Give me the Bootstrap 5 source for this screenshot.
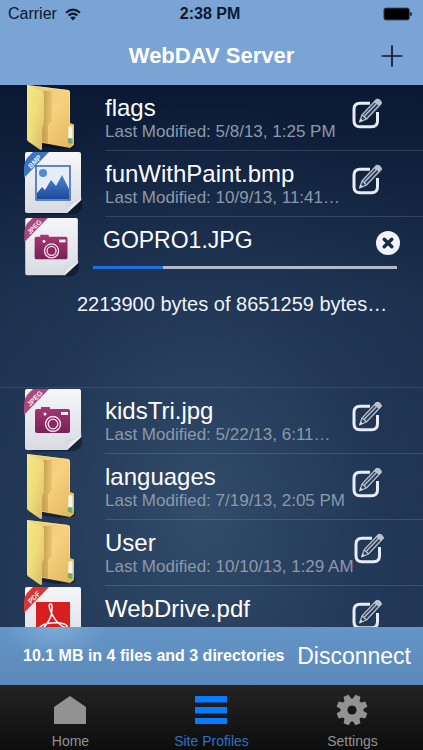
<!DOCTYPE html>
<html lang="en">
<head>
<meta charset="utf-8">
<meta name="viewport" content="width=device-width, initial-scale=1">
<title>WebDAV Server</title>
<link href="https://cdn.jsdelivr.net/npm/bootstrap@5.3.0/dist/css/bootstrap.min.css" rel="stylesheet">
<style>
  body { font-family: "Liberation Sans", Arial, sans-serif; background: #111; color: #fff; }
  button { color: inherit; }
  .top-bar { background: #7aa4d4; }
  .status-row { height: 28px; padding: 0 11px 0 8px; font-size: 16px; line-height: 28px; color: #0b1830; }
  .side { flex: 1 1 0; }
  .title-row { height: 57px; padding: 0 20px 2px; }
  .title-row h1 { font-size: 22px; line-height: 28px; }
  .files-pane {
    background:
      radial-gradient(ellipse 75% 75% at 48% 78%, rgba(62, 90, 120, .65), rgba(42, 66, 98, .35) 55%, transparent),
      linear-gradient(#0a1933, #1a2f4c 40%, #1f3453);
  }
  .file-row { padding-left: 22px; gap: 21px; }
  .file-icon { width: 62px; height: 66px; }
  .file-body { height: 66px; border-bottom: 1px solid rgba(255, 255, 255, .13); padding: 10px 41px 0 0; }
  .file-text { min-width: 0; flex: 1 1 0; }
  .file-name { font-size: 24px; line-height: 26px; }
  .file-date { font-size: 17px; line-height: 22px; color: #8d99aa; }
  .edit-btn { margin-top: 3px; width: 30px; height: 32px; }
  .transfer-row { height: 171px; padding: 0 26px 0 24px; gap: 13px; border-bottom: 1px solid rgba(255, 255, 255, .1); }
  .transfer-icon { width: 56px; height: 62px; }
  .transfer-head { height: 49px; padding: 10px 0 0 10px; margin-right: -3px; }
  .transfer-name { font-size: 23px; line-height: 26px; }
  .transfer-bar { height: 3px; background: #b4b9c8; border-radius: 0; }
  .transfer-bar .progress-bar { background: #1f6fdc; }
  .transfer-note { font-size: 20px; line-height: 24px; margin: 23px 0 0 -16px; color: #eef3fa; }
  .ribbon-text { font-size: 7px; font-weight: 700; fill: #fdeef4; }
  .summary-bar { height: 58px; padding: 0 12px 0 23px; background: radial-gradient(ellipse 50px 32px at 55px 0, rgba(140, 185, 225, .6), transparent), linear-gradient(#6595c7, #5a89b9); }
  .summary-text { font-size: 16px; line-height: 20px; }
  .disconnect { font-size: 23px; line-height: 28px; }
  .tab-strip { height: 65px; background: linear-gradient(#232323, #0d0d0d); }
  .tab-link { color: #929292; font-size: 14px; line-height: 18px; padding-top: 9px; gap: 4px; }
  .tab-link.current { color: #0a7bff; }
  .tab-link.current span { color: #2a72c8; }
</style>
<script src="https://cdn.jsdelivr.net/npm/bootstrap@5.3.0/dist/js/bootstrap.bundle.min.js"></script>
</head>
<body class="vh-100 d-flex flex-column overflow-hidden">

<svg width="0" height="0" class="position-absolute" aria-hidden="true">
  <defs>
    <linearGradient id="paper" x1="0" y1="0" x2="0" y2="1"><stop offset="0" stop-color="#f6f6f9"/><stop offset="1" stop-color="#d9dbe4"/></linearGradient>
    <linearGradient id="curl" x1="0" y1="0" x2="1" y2="1"><stop offset="0" stop-color="#fff"/><stop offset=".35" stop-color="#d5d8e0"/><stop offset=".55" stop-color="#f4f5f8"/></linearGradient>
    <linearGradient id="plum" x1="0" y1="0" x2="0" y2="1"><stop offset="0" stop-color="#a8376f"/><stop offset="1" stop-color="#79205a"/></linearGradient>
    <linearGradient id="blue" x1="0" y1="0" x2="0" y2="1"><stop offset="0" stop-color="#4a86d0"/><stop offset="1" stop-color="#1d4a9c"/></linearGradient>
    <linearGradient id="flap" x1="0" y1="0" x2="1" y2="1"><stop offset="0" stop-color="#f5e883"/><stop offset=".5" stop-color="#efdb7c"/><stop offset="1" stop-color="#d6bb5c"/></linearGradient>
    <linearGradient id="back" x1="0" y1="0" x2="1" y2="1"><stop offset="0" stop-color="#edcb78"/><stop offset=".5" stop-color="#f8d07e"/><stop offset="1" stop-color="#e0b55a"/></linearGradient>
    <linearGradient id="shade" x1="0" y1="0" x2="1" y2="0"><stop offset="0" stop-color="#8b6a1c" stop-opacity=".5"/><stop offset="1" stop-color="#8b6a1c" stop-opacity="0.100"/></linearGradient>
  </defs>
  <symbol id="folder" viewBox="0 0 62 66">
    <path d="M10 60L36 64L52 63L54 58L40 52Z" fill="#000" opacity=".4"/>
    <path d="M5 0L46 5Q48 5.500 48 7V38L52 39.500V60L48 63L5 55Z" fill="url(#back)"/>
    <path d="M21 6H30V36L26 40V58L20 57Z" fill="url(#shade)"/>
    <path d="M46.500 41L50.500 41.500V58L46 57Z" fill="#f2f5ec"/>
    <path d="M46 53L50.500 53.500V59L46 58Z" fill="#74a867"/>
    <path d="M5 0L20 6Q22 7 22 9V39L20 42.500V64Q19.500 66 17 64L7 57Q5 56 5 53Z" fill="url(#flap)"/>
    <path d="M5.500 .5L46 5.500Q47.500 6 47.500 7.500V38" fill="none" stroke="#ffe9aa" stroke-width=".6"/>
  </symbol>
  <symbol id="sheet" viewBox="0 0 62 66">
    <path d="M8 61H46L60 49V56Q58 63 50 63.500H10Z" fill="#000" opacity=".35"/>
    <path d="M5 1H57Q59 1 59 3V49L45 62H5Q3 62 3 60V3Q3 1 5 1Z" fill="url(#paper)"/>
    <path d="M45 62Q46 57 44 52Q54 53 59 46V49Z" fill="url(#curl)" stroke="#c3c7d0" stroke-width=".5"/>
  </symbol>
  <symbol id="jpeg" viewBox="0 0 62 66">
    <use href="#sheet"/>
    <path d="M11 1H27L2 27V16Q2 11 5 7Z" fill="#a8487c"/>
    <path d="M15 21H19V19H28V21H46Q48 21 48 23V43Q48 45 46 45H15Q13 45 13 43V23Q13 21 15 21Z" fill="url(#plum)"/>
    <circle cx="31" cy="36" r="9" fill="#8b285f"/>
    <circle cx="31" cy="36" r="7.500" fill="none" stroke="#f6e9f1" stroke-width="1.300"/>
    <circle cx="31" cy="36" r="4.800" fill="none" stroke="#f6e9f1" stroke-width="1.300"/>
    <circle cx="23" cy="26" r="1.500" fill="#fff"/>
    <rect x="39" y="24" width="7" height="3" fill="#f7eef3"/>
  </symbol>
  <symbol id="bmp" viewBox="0 0 62 66">
    <use href="#sheet"/>
    <path d="M11 1H27L2 27V16Q2 11 5 7Z" fill="#3a74c0"/>
    <rect x="14" y="15" width="34" height="34" fill="#e6edf8" stroke="#2a59a5" stroke-width="1.400"/>
    <circle cx="21" cy="22" r="4" fill="#4f8cd5"/>
    <path d="M15 48V42L20 36L23 39L29 29L34 35L40 24L47 38V48Z" fill="url(#blue)"/>
  </symbol>
  <symbol id="pdf" viewBox="0 0 62 66">
    <use href="#sheet"/>
    <path d="M11 1H27L2 27V16Q2 11 5 7Z" fill="#db3432"/>
    <rect x="14" y="16" width="34" height="34" fill="#d71f22"/>
    <path d="M28 18C31 16 30 26 29 30C27 35 22 43 18 44C15 44 18 38 29 37C38 36 46 38 45 41C42 43 34 36 31 30C28 25 26 19 28 18Z" fill="none" stroke="#fff" stroke-width="1.500"/>
  </symbol>
  <symbol id="edit" viewBox="0 0 30 32">
    <path d="M18 5.200H8Q2 5.200 2 11.200V22.800Q2 28.800 8 28.800H19.500Q25.500 28.800 25.500 22.800V14" fill="none" stroke="#e8ecf6" stroke-width="3"/>
    <path d="M7.500 24L10 17L24.500 1.500Q27.500 1 29.700 4.500L29 7L14.500 21.500Z" fill="#24364f" stroke="#1b2d48" stroke-width="2.400"/>
    <path d="M7.500 24L10 17L24.500 1.500Q28 1 29.500 5L14.500 21Z" fill="#2c3e57" stroke="#b9c1cd" stroke-width="1.200" stroke-linejoin="round"/>
    <path d="M22 4.200L24.500 1.500Q28 1 29.500 5L27 7.800Z" fill="#b9c1cd"/>
    <path d="M12 18.500L24.500 5.500M10 17L12 18.500L14.500 21" fill="none" stroke="#b9c1cd" stroke-width="1.300"/>
    <path d="M7.500 24L8.700 20.500L11 22.600Z" fill="#d7dce5"/>
  </symbol>
</svg>

<header class="top-bar flex-shrink-0">
  <div class="status-row d-flex align-items-center">
    <div class="side d-flex align-items-center gap-2">
      <span>Carrier</span>
      <svg width="16" height="13" viewBox="0 0 16 13" role="img" aria-label="Wi-Fi"><path d="M1 4.800Q8-1.500 15 4.800M3.600 7.600Q8 3.700 12.400 7.600" fill="none" stroke="#0b1830" stroke-width="2"/><path d="M5.200 9.600Q8 7.300 10.800 9.600L8 12.500Z" fill="#0b1830"/></svg>
    </div>
    <strong>2:38 PM</strong>
    <div class="side d-flex justify-content-end">
      <svg width="29" height="14" viewBox="0 0 33 14" preserveAspectRatio="none" role="img" aria-label="Battery full"><rect x="1" y="1" width="29" height="12" rx="2" fill="#000" stroke="#3c526c"/><path d="M31 5Q33 5 33 7T31 9Z" fill="#0b1830"/></svg>
    </div>
  </div>
  <div class="title-row d-flex align-items-center">
    <div class="side"></div>
    <h1 class="m-0 fw-bold">WebDAV Server</h1>
    <div class="side d-flex justify-content-end">
      <button type="button" class="border-0 bg-transparent p-0 d-flex" aria-label="Add"><svg width="22" height="22" viewBox="0 0 22 22"><path d="M11 .5V21.500M.5 11H21.500" stroke="#0b1830" stroke-width="1.700"/></svg></button>
    </div>
  </div>
</header>

<main class="files-pane flex-grow-1 overflow-hidden">
  <ul class="list-unstyled m-0">
    <li class="file-row d-flex">
      <svg class="file-icon flex-shrink-0" aria-hidden="true"><use href="#folder"/></svg>
      <div class="file-body d-flex flex-grow-1">
        <div class="file-text text-nowrap"><div class="file-name">flags</div><div class="file-date">Last Modified: 5/8/13, 1:25 PM</div></div>
        <button type="button" class="edit-btn border-0 bg-transparent p-0 flex-shrink-0" aria-label="Edit flags"><svg class="d-block" width="30" height="32"><use href="#edit"/></svg></button>
      </div>
    </li>
    <li class="file-row d-flex">
      <svg class="file-icon flex-shrink-0" viewBox="0 0 62 66"><use href="#bmp"/><text class="ribbon-text" transform="translate(9 18) rotate(-46)">BMP</text></svg>
      <div class="file-body d-flex flex-grow-1">
        <div class="file-text text-nowrap"><div class="file-name">funWithPaint.bmp</div><div class="file-date">Last Modified: 10/9/13, 11:41…</div></div>
        <button type="button" class="edit-btn border-0 bg-transparent p-0 flex-shrink-0" aria-label="Edit funWithPaint.bmp"><svg class="d-block" width="30" height="32"><use href="#edit"/></svg></button>
      </div>
    </li>
    <li class="transfer-row d-flex">
      <svg class="transfer-icon flex-shrink-0" viewBox="2 0 59 66"><use href="#jpeg" width="62" height="66"/><text class="ribbon-text" transform="translate(8 19) rotate(-46)">JPEG</text></svg>
      <div class="flex-grow-1">
        <div class="transfer-head d-flex justify-content-between align-items-start">
          <div class="transfer-name" id="transfer">GOPRO1.JPG</div>
          <button type="button" class="border-0 bg-transparent p-0 d-flex mt-1" aria-label="Cancel transfer"><svg width="24" height="24" viewBox="0 0 24 24"><circle cx="12" cy="12" r="12" fill="#f1f4fa"/><path d="M8.200 8.200L15.800 15.800M15.800 8.200L8.200 15.800" stroke="#182b45" stroke-width="3.400" stroke-linecap="round"/></svg></button>
        </div>
        <div class="transfer-bar progress" role="progressbar" aria-labelledby="transfer" aria-valuenow="2213900" aria-valuemin="0" aria-valuemax="8651259"><div class="progress-bar" style="width: 23%"></div></div>
        <div class="transfer-note text-nowrap">2213900 bytes of 8651259 bytes…</div>
      </div>
    </li>
    <li class="file-row d-flex">
      <svg class="file-icon flex-shrink-0" viewBox="0 0 62 66"><use href="#jpeg"/><text class="ribbon-text" transform="translate(8 19) rotate(-46)">JPEG</text></svg>
      <div class="file-body d-flex flex-grow-1">
        <div class="file-text text-nowrap"><div class="file-name">kidsTri.jpg</div><div class="file-date">Last Modified: 5/22/13, 6:11…</div></div>
        <button type="button" class="edit-btn border-0 bg-transparent p-0 flex-shrink-0" aria-label="Edit kidsTri.jpg"><svg class="d-block" width="30" height="32"><use href="#edit"/></svg></button>
      </div>
    </li>
    <li class="file-row d-flex">
      <svg class="file-icon flex-shrink-0" aria-hidden="true"><use href="#folder"/></svg>
      <div class="file-body d-flex flex-grow-1">
        <div class="file-text text-nowrap"><div class="file-name">languages</div><div class="file-date">Last Modified: 7/19/13, 2:05 PM</div></div>
        <button type="button" class="edit-btn border-0 bg-transparent p-0 flex-shrink-0" aria-label="Edit languages"><svg class="d-block" width="30" height="32"><use href="#edit"/></svg></button>
      </div>
    </li>
    <li class="file-row d-flex">
      <svg class="file-icon flex-shrink-0" aria-hidden="true"><use href="#folder"/></svg>
      <div class="file-body d-flex flex-grow-1">
        <div class="file-text text-nowrap"><div class="file-name">User</div><div class="file-date">Last Modified: 10/10/13, 1:29 AM</div></div>
        <button type="button" class="edit-btn border-0 bg-transparent p-0 flex-shrink-0" aria-label="Edit User"><svg class="d-block" width="30" height="32"><use href="#edit"/></svg></button>
      </div>
    </li>
    <li class="file-row d-flex">
      <svg class="file-icon flex-shrink-0" viewBox="0 0 62 66"><use href="#pdf"/><text class="ribbon-text" transform="translate(9 18) rotate(-46)">PDF</text></svg>
      <div class="file-body d-flex flex-grow-1">
        <div class="file-text text-nowrap"><div class="file-name">WebDrive.pdf</div></div>
        <button type="button" class="edit-btn border-0 bg-transparent p-0 flex-shrink-0" aria-label="Edit WebDrive.pdf"><svg class="d-block" width="30" height="32"><use href="#edit"/></svg></button>
      </div>
    </li>
  </ul>
</main>

<section class="summary-bar d-flex align-items-center justify-content-between flex-shrink-0 text-nowrap">
  <strong class="summary-text">10.1 MB in 4 files and 3 directories</strong>
  <button type="button" class="disconnect border-0 bg-transparent p-0">Disconnect</button>
</section>

<nav class="tab-strip row g-0 flex-shrink-0" aria-label="Main">
  <a href="#home" class="tab-link col-4 d-flex flex-column align-items-center text-decoration-none">
    <svg width="34" height="34" viewBox="0 0 34 34" aria-hidden="true"><path d="M1 13L17 2L33 13V30H1Z" fill="#929292"/></svg>
    <span>Home</span>
  </a>
  <a href="#profiles" class="tab-link current col-4 d-flex flex-column align-items-center text-decoration-none" aria-current="page">
    <svg width="34" height="34" viewBox="0 0 34 34" aria-hidden="true"><path d="M1 2H33V8.500H1ZM1 13H33V19.500H1ZM1 24H33V30H1Z" fill="currentColor"/></svg>
    <span>Site Profiles</span>
  </a>
  <a href="#settings" class="tab-link col-4 d-flex flex-column align-items-center text-decoration-none">
    <svg width="34" height="34" viewBox="0 0 34 34" aria-hidden="true"><g fill="#929292" transform="translate(17 16)"><circle r="11.500"/><path id="tooth" d="M-3.500-11L-2.700-15.500H2.700L3.500-11V11L2.700 15.500H-2.700L-3.500 11Z" transform="rotate(22.500)"/><use href="#tooth" transform="rotate(45)"/><use href="#tooth" transform="rotate(90)"/><use href="#tooth" transform="rotate(135)"/><circle r="4.600" fill="#171717"/></g></svg>
    <span>Settings</span>
  </a>
</nav>
</body>
</html>
